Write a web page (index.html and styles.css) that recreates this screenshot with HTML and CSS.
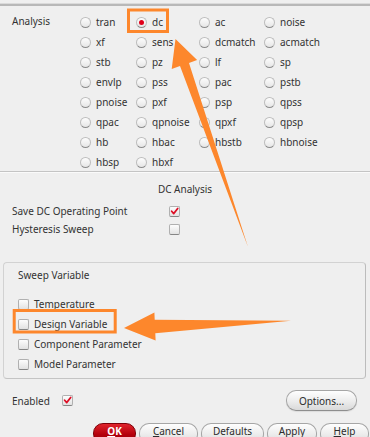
FILE: index.html
```html
<!DOCTYPE html>
<html lang="en">
<head>
  <meta charset="UTF-8" />
  <title>Choosing Analyses</title>
  <link rel="stylesheet" href="styles.css">
</head>
<body>
  <div class="topbar"></div>

  <div class="analysis">
    <div class="analysis-label">Analysis</div>
    <div class="analysis-grid">
      <label class="opt"><span class="radio"></span>tran</label>
      <label class="opt"><span class="radio on"></span>dc</label>
      <label class="opt"><span class="radio"></span>ac</label>
      <label class="opt"><span class="radio"></span>noise</label>

      <label class="opt"><span class="radio"></span>xf</label>
      <label class="opt"><span class="radio"></span>sens</label>
      <label class="opt"><span class="radio"></span>dcmatch</label>
      <label class="opt"><span class="radio"></span>acmatch</label>

      <label class="opt"><span class="radio"></span>stb</label>
      <label class="opt"><span class="radio"></span>pz</label>
      <label class="opt"><span class="radio"></span>lf</label>
      <label class="opt"><span class="radio"></span>sp</label>

      <label class="opt"><span class="radio"></span>envlp</label>
      <label class="opt"><span class="radio"></span>pss</label>
      <label class="opt"><span class="radio"></span>pac</label>
      <label class="opt"><span class="radio"></span>pstb</label>

      <label class="opt"><span class="radio"></span>pnoise</label>
      <label class="opt"><span class="radio"></span>pxf</label>
      <label class="opt"><span class="radio"></span>psp</label>
      <label class="opt"><span class="radio"></span>qpss</label>

      <label class="opt"><span class="radio"></span>qpac</label>
      <label class="opt"><span class="radio"></span>qpnoise</label>
      <label class="opt"><span class="radio"></span>qpxf</label>
      <label class="opt"><span class="radio"></span>qpsp</label>

      <label class="opt"><span class="radio"></span>hb</label>
      <label class="opt"><span class="radio"></span>hbac</label>
      <label class="opt"><span class="radio"></span>hbstb</label>
      <label class="opt"><span class="radio"></span>hbnoise</label>

      <label class="opt"><span class="radio"></span>hbsp</label>
      <label class="opt"><span class="radio"></span>hbxf</label>
    </div>
  </div>

  <div class="separator"></div>

  <div class="dc-title">DC Analysis</div>

  <div class="dc-options">
    <div class="dc-row">
      <span class="dc-label">Save DC Operating Point</span>
      <span class="check on"><svg viewBox="0 0 11 11"><path d="M2 5.2 L4.6 8 L9.4 1.8" /></svg></span>
    </div>
    <div class="dc-row">
      <span class="dc-label">Hysteresis Sweep</span>
      <span class="check"></span>
    </div>
  </div>

  <fieldset class="sweep">
    <div class="sweep-title">Sweep Variable</div>
    <label class="sweep-row"><span class="check"></span>Temperature</label>
    <label class="sweep-row"><span class="check"></span>Design Variable</label>
    <label class="sweep-row"><span class="check"></span>Component Parameter</label>
    <label class="sweep-row"><span class="check"></span>Model Parameter</label>
  </fieldset>

  <div class="enabled-row">
    <span class="enabled-label">Enabled</span>
    <span class="check on"><svg viewBox="0 0 11 11"><path d="M2 5.2 L4.6 8 L9.4 1.8" /></svg></span>
    <button class="btn btn-options">Options...</button>
  </div>

  <div class="button-row">
    <button class="btn btn-ok"><u>O</u>K</button>
    <button class="btn btn-cancel"><u>C</u>ancel</button>
    <button class="btn btn-defaults">Defaults</button>
    <button class="btn btn-apply">Apply</button>
    <button class="btn btn-help"><u>H</u>elp</button>
  </div>

  <!-- annotations drawn over the dialog -->
  <svg class="marks" viewBox="0 0 370 437" width="370" height="437">
    <rect x="128.5" y="10" width="39" height="21.5" />
    <rect x="14.2" y="310.5" width="101" height="21.5" />
    <polygon class="arrow" points="175.5,39 197.1,60.1 189,63 248,247 180,66 171.7,68.9" />
    <polygon class="arrow" points="124,328 154.4,312.6 154.7,319.8 291,320.7 155.3,333.2 155.6,340.6" />
  </svg>
</body>
</html>
```

FILE: styles.css
```css
html, body {
  margin: 0;
  padding: 0;
  background: #efefef;
  color: #333;
  font-family: "Noto Sans", "Open Sans", sans-serif;
  font-size: 10px;
  width: 370px;
  height: 437px;
  overflow: hidden;
  position: relative;
}

.topbar {
  margin-top: 3px;
  height: 0;
  border-top: 1px solid #dadada;
  border-bottom: 2px solid #b8b8b8;
}

.analysis {
  display: flex;
  padding-top: 5px;
}

.analysis-label {
  width: 68px;
  padding-left: 12px;
  line-height: 21px;
}

.analysis-grid {
  display: grid;
  grid-template-columns: 56px 63px 65px auto;
  grid-auto-rows: 20px;
  padding-top: 1px;
}

.opt {
  display: flex;
  align-items: center;
  gap: 5px;
  white-space: nowrap;
}

.radio {
  position: relative;
  width: 11px;
  height: 11px;
  box-sizing: border-box;
  border-radius: 50%;
  border: 1px solid #bdbdbd;
  border-bottom-color: #8c8c8c;
  background: linear-gradient(#fdfdfd, #e6e6e6);
  flex: none;
}

.radio.on::after {
  content: "";
  position: absolute;
  left: 2px;
  top: 2px;
  width: 5px;
  height: 5px;
  border-radius: 50%;
  background: #e0001a;
}

.separator {
  margin-top: -1px;
  height: 0;
  border-top: 1px solid #c4c4c4;
  border-bottom: 1px solid #fafafa;
}

.dc-title {
  margin-top: 8px;
  line-height: 16px;
  text-align: center;
}

.dc-options {
  margin-top: 5px;
}

.dc-row {
  display: flex;
  align-items: center;
  height: 18px;
  padding-left: 12px;
}

.dc-label {
  width: 157px;
}

.check {
  display: inline-block;
  width: 11px;
  height: 11px;
  box-sizing: border-box;
  border: 1px solid #b0b0b0;
  border-bottom-color: #858585;
  border-radius: 2px;
  background: linear-gradient(#fdfdfd, #e2e2e2);
  flex: none;
}

.check svg {
  display: block;
  width: 9px;
  height: 9px;
}

.check path {
  fill: none;
  stroke: #dd0d24;
  stroke-width: 2.2;
  stroke-linecap: round;
  stroke-linejoin: round;
}

.sweep {
  margin: 24px 4px 0 3px;
  padding: 5px 0 4px 14px;
  height: 117px;
  box-sizing: border-box;
  border: 1px solid #d2d2d2;
  border-right-color: #bcbcbc;
  border-bottom-color: #c4c4c4;
  border-radius: 4px;
}

.sweep-title {
  line-height: 14px;
  margin-bottom: 12px;
}

.sweep-row {
  display: flex;
  align-items: center;
  gap: 5px;
  height: 20px;
}

.enabled-row {
  display: flex;
  align-items: center;
  margin-top: 11px;
  padding: 0 13px 0 12px;
  height: 21px;
}

.enabled-label {
  width: 50px;
}

.btn {
  font-family: "Noto Sans", "Open Sans", sans-serif;
  font-size: 10px;
  color: #2c2c2c;
  height: 21px;
  padding: 0;
  border: 1px solid #a6a6a6;
  border-bottom-color: #8e8e8e;
  border-radius: 10px;
  background: linear-gradient(#fefefe, #ececec 55%, #d9d9d9);
  box-shadow: 0 1px 1px rgba(0, 0, 0, 0.08);
}

.btn u {
  text-underline-offset: 1px;
}

.btn-options {
  margin-left: auto;
  width: 71px;
}

.button-row {
  display: flex;
  justify-content: flex-end;
  gap: 3px;
  margin-top: 12px;
  padding-right: 1px;
}

.button-row .btn {
  padding-bottom: 6px;
}

.btn-ok {
  width: 43px;
  color: #fff;
  font-weight: bold;
  border-color: #7d0008;
  background: linear-gradient(#e0242c, #b5000c 55%, #8e0008);
}

.btn-cancel { width: 59px; }
.btn-defaults { width: 63px; }
.btn-apply { width: 50px; }
.btn-help { width: 49px; }

.marks {
  position: absolute;
  left: 0;
  top: 0;
  pointer-events: none;
}

.marks rect {
  fill: none;
  stroke: #fd872c;
  stroke-width: 3;
}

.marks .arrow {
  fill: #fd872c;
}
```
